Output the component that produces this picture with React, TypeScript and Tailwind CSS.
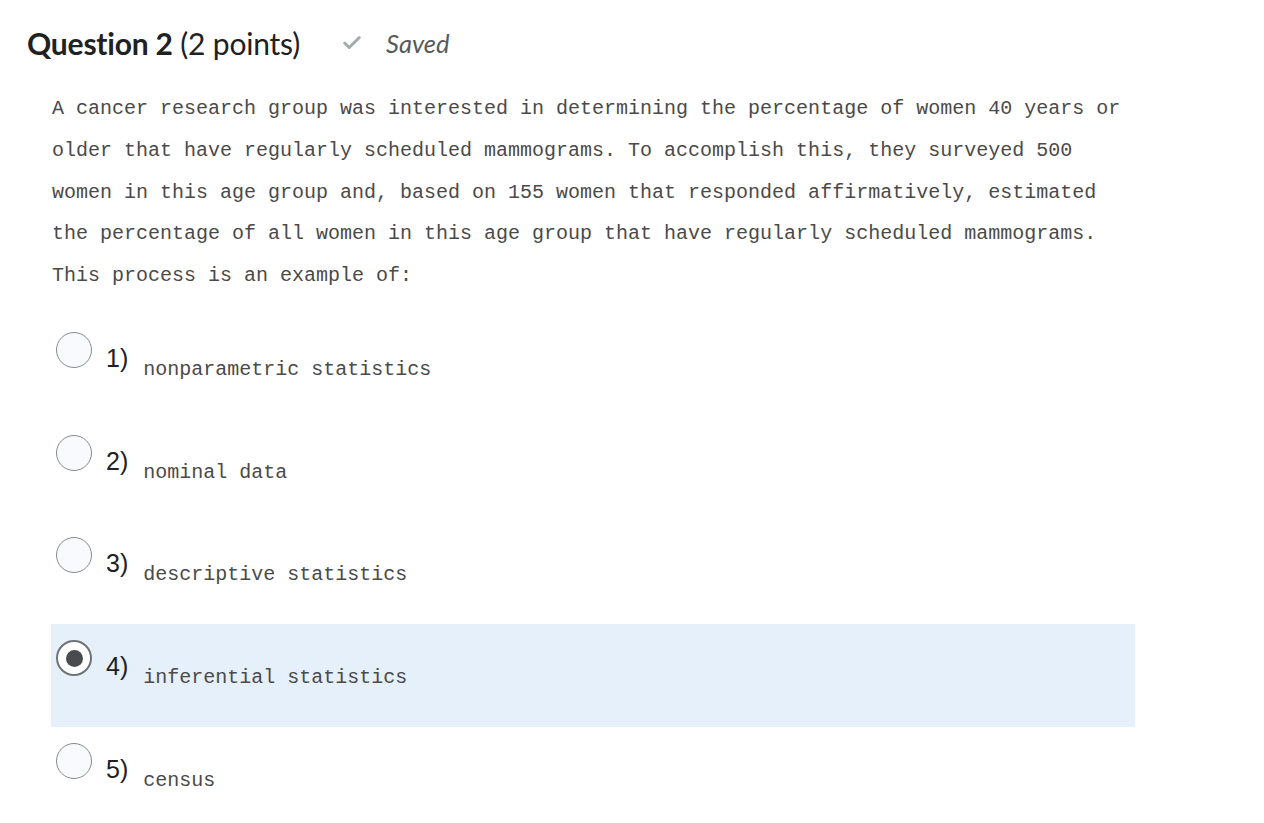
import { Check } from "lucide-react";

const choices = [
  { n: "1)", text: "nonparametric statistics" },
  { n: "2)", text: "nominal data" },
  { n: "3)", text: "descriptive statistics" },
  { n: "4)", text: "inferential statistics", selected: true },
  { n: "5)", text: "census" },
];

const mono = { fontFamily: '"Liberation Mono", "Courier New", monospace' };

export default function App() {
  return (
    <div className="min-h-screen bg-white text-[#202122]" style={{ fontFamily: "Lato, sans-serif" }}>
      <div className="flex items-center pl-[27px] pt-[22px] h-[42px] box-content">
        <h2 className="text-[30px] tracking-[-0.2px]">
          <span className="font-bold">Question 2</span> (2 points)
        </h2>
        <Check className="w-[22px] h-[22px] ml-[41px] text-[#a4a9ac]" strokeWidth={3.2} />
        <span className="ml-[23px] text-[25.5px] italic text-[#565a5c]">Saved</span>
      </div>

      <div className="pl-[52px] pt-[24px] text-[20px] leading-[41.75px] text-[#4a4a4a]" style={mono}>
        <p>A cancer research group was interested in determining the percentage of women 40 years or</p>
        <p>older that have regularly scheduled mammograms. To accomplish this, they surveyed 500</p>
        <p>women in this age group and, based on 155 women that responded affirmatively, estimated</p>
        <p>the percentage of all women in this age group that have regularly scheduled mammograms.</p>
        <p>This process is an example of:</p>
      </div>

      <div className="pl-[51px] pt-[19px] w-[1135px] box-border">
        {choices.map((c) => (
          <div key={c.n} className={`flex items-start h-[102.8px] pl-[5px] pt-[16px] ${c.selected ? "bg-[#e6f0fb]" : ""}`}>
            {c.selected ? (
              <div className="w-[36px] h-[36px] rounded-full border-2 border-[#6e7376] bg-white flex items-center justify-center shrink-0">
                <div className="w-[17px] h-[17px] rounded-full bg-[#494c4e]" />
              </div>
            ) : (
              <div className="w-[36px] h-[36px] rounded-full border border-[#868a8d] bg-[#f9fafe] shrink-0" />
            )}
            <span className="ml-[14px] mt-[11px] text-[25px] leading-[30px] text-[#202122]" style={{ fontFamily: '"Liberation Sans", Arial, sans-serif' }}>
              {c.n}
            </span>
            <span className="ml-[15px] mt-[23px] text-[20px] leading-[30px] text-[#4a4a4a]" style={mono}>
              {c.text}
            </span>
          </div>
        ))}
      </div>
    </div>
  );
}
